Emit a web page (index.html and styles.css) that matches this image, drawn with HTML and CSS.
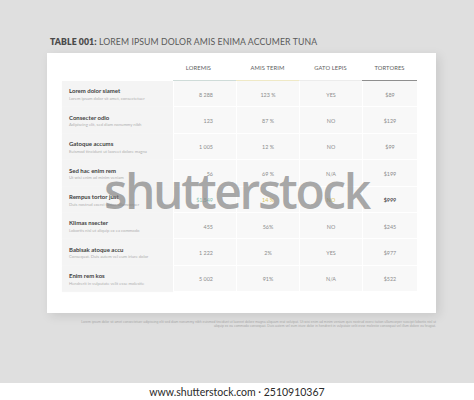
FILE: index.html
```html
<!DOCTYPE html>
<html>
<head>
<meta charset="utf-8">
<link rel="stylesheet" href="styles.css">
</head>
<body>
<main class="stage">
  <h1 class="title"><b>TABLE 001:</b> LOREM IPSUM DOLOR AMIS ENIMA ACCUMER TUNA</h1>
  <section class="card">
    <div class="row head">
      <div class="label-cell blank"></div>
      <div class="hcell c1">LOREMIS</div>
      <div class="hcell c2">AMIS TERIM</div>
      <div class="hcell c3">GATO LEPIS</div>
      <div class="hcell c4">TORTORES</div>
    </div>
    <div class="body">
      <div class="row">
        <div class="label-cell"><span class="lt">Lorem dolor siamet</span><span class="ls">Lorem ipsum dolor sit amet, consectetuer</span></div>
        <div class="cell num">8 288</div><div class="cell">123 %</div><div class="cell">YES</div><div class="cell">$89</div>
      </div>
      <div class="row">
        <div class="label-cell"><span class="lt">Consecter odio</span><span class="ls">Adipiscing elit, sed diam nonummy nibh</span></div>
        <div class="cell num">123</div><div class="cell">87 %</div><div class="cell">NO</div><div class="cell">$129</div>
      </div>
      <div class="row">
        <div class="label-cell"><span class="lt">Gatoque accums</span><span class="ls">Euismod tincidunt ut laoreet dolore magna</span></div>
        <div class="cell num">1 005</div><div class="cell">12 %</div><div class="cell">NO</div><div class="cell">$99</div>
      </div>
      <div class="row">
        <div class="label-cell"><span class="lt">Sed hac enim rem</span><span class="ls">Ut wisi enim ad minim veniam</span></div>
        <div class="cell num">56</div><div class="cell">69 %</div><div class="cell">N/A</div><div class="cell">$199</div>
      </div>
      <div class="row hl">
        <div class="label-cell"><span class="lt">Rempus tortor just</span><span class="ls">Duis nostrud exerci tation ullamcorper</span></div>
        <div class="cell num teal">$1,549</div><div class="cell yellow">14 %</div><div class="cell yellow">NO</div><div class="cell strong">$999</div>
      </div>
      <div class="row">
        <div class="label-cell"><span class="lt">Klimas nsecter</span><span class="ls">Lobortis nisl ut aliquip ex ea commodo</span></div>
        <div class="cell num">455</div><div class="cell">56%</div><div class="cell">NO</div><div class="cell">$245</div>
      </div>
      <div class="row">
        <div class="label-cell"><span class="lt">Babisak atoque accu</span><span class="ls">Consequat. Duis autem vel eum iriure dolor</span></div>
        <div class="cell num">1 222</div><div class="cell">2%</div><div class="cell">YES</div><div class="cell">$977</div>
      </div>
      <div class="row">
        <div class="label-cell"><span class="lt">Enim rem kos</span><span class="ls">Hendrerit in vulputate velit esse molestie</span></div>
        <div class="cell num">5 002</div><div class="cell">91%</div><div class="cell">N/A</div><div class="cell">$522</div>
      </div>
    </div>
  </section>
  <p class="note">Lorem ipsum dolor sit amet consectetuer adipiscing elit sed diam nonummy nibh euismod tincidunt ut laoreet dolore magna aliquam erat volutpat. Ut wisi enim ad minim veniam quis nostrud exerci tation ullamcorper suscipit lobortis nisl ut aliquip ex ea commodo consequat. Duis autem vel eum iriure dolor in hendrerit in vulputate velit esse molestie consequat vel illum dolore eu feugiat.</p>
  <div class="watermark">shutterstock</div>
</main>
<footer class="credit">www.shutterstock.com · 2510910367</footer>
</body>
</html>
```
FILE: styles.css
```css
* { box-sizing: border-box; margin: 0; padding: 0; }
html, body { width: 474px; height: 400px; overflow: hidden; }
body { background: #ffffff; font-family: "Liberation Sans", Arial, sans-serif; }

.stage {
  position: relative;
  height: 383px;
  background: #dfdfdf;
  padding: 37px 38px 0 47px;
}

.title {
  font-family: "Lato", "Liberation Sans", sans-serif;
  font-size: 8.7px;
  line-height: 10px;
  font-weight: 400;
  color: #5a5a5a;
  margin-left: 3px;
  letter-spacing: 0.1px;
}
.title b { font-weight: 800; color: #4a4a4a; }

.card {
  margin-top: 6px;
  width: 389px;
  height: 260px;
  background: #ffffff;
  padding: 0 18px 0 15px;
  box-shadow: 3px 3px 10px rgba(0, 0, 0, 0.10);
}

.row {
  display: grid;
  grid-template-columns: 111px 63px 63px 63px 55px;
  height: 25.4px;
}
.row.head { height: 28px; }
.body { display: flex; flex-direction: column; gap: 1px; }

.hcell {
  display: flex;
  align-items: center;
  justify-content: center;
  padding-top: 2px;
  font-family: "Lato", "Liberation Sans", sans-serif;
  font-size: 5.8px;
  letter-spacing: 0.1px;
  color: #5e5e5e;
  border-bottom: 1px solid #e8e8e8;
}
.hcell.c1 { border-bottom-color: #cfdcd9; padding-right: 12px; }
.hcell.c2 { border-bottom-color: #efe9c6; }
.hcell.c3 { border-bottom-color: #ececec; }
.hcell.c4 { border-bottom-color: #8f8f8f; }
.label-cell.blank { background: transparent; box-shadow: none; }

.label-cell {
  display: flex;
  flex-direction: column;
  justify-content: center;
  gap: 1.5px;
  padding-left: 7px;
  padding-top: 1px;
  background: #f4f4f4;
  box-shadow: 0 1px 1px rgba(0,0,0,0.04);
}
.lt {
  font-family: "Lato", "Liberation Sans", sans-serif;
  font-weight: 700;
  font-size: 6px;
  line-height: 7px;
  color: #3f3f3f;
}
.ls {
  font-family: "Lato", "Liberation Sans", sans-serif;
  font-size: 4.2px;
  line-height: 5px;
  color: #b0b0b0;
}

.cell {
  display: flex;
  align-items: center;
  justify-content: center;
  padding-top: 2px;
  font-family: "Lato", "Liberation Sans", sans-serif;
  font-size: 5.4px;
  color: #8c8c8c;
  background: #f8f8f8;
  border-left: 1px solid #ffffff;
}
.cell.num { justify-content: flex-end; padding-right: 23px; }
.cell.teal { color: #86bfb3; }
.cell.yellow { color: #d8c458; }
.cell.strong { color: #4e4e4e; font-weight: 700; }

.note {
  margin: 7px 0 0 24px;
  width: 365px;
  font-size: 3.4px;
  line-height: 4.2px;
  color: #a8a8a8;
  text-align: right;
}

.watermark {
  position: absolute;
  left: 104px;
  top: 163px;
  font-family: "Open Sans", "Liberation Sans", sans-serif;
  font-weight: 600;
  font-size: 48px;
  line-height: 56px;
  letter-spacing: -2.4px;
  color: rgba(125, 125, 125, 0.66);
}

.credit {
  height: 17px;
  display: flex;
  align-items: center;
  justify-content: center;
  font-family: "Lato", "Liberation Sans", sans-serif;
  font-size: 10.5px;
  color: #2a2a2a;
  background: #ffffff;
}
```
